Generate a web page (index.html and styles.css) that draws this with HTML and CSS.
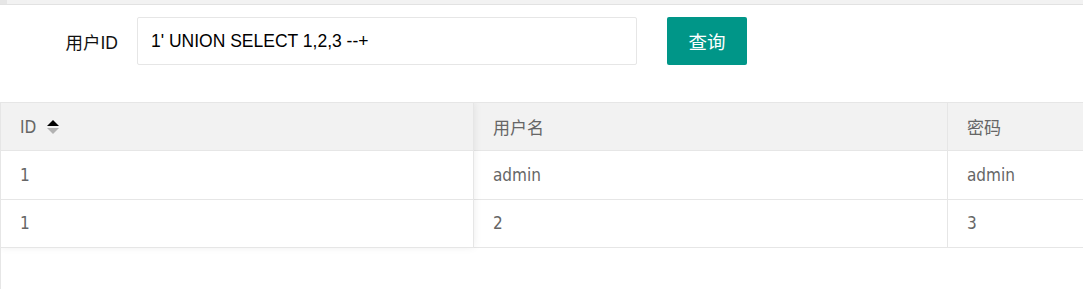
FILE: index.html
```html
<!DOCTYPE html>
<html lang="zh-CN">
<head>
    <meta charset="UTF-8">
    <title>用户查询</title>
    <link rel="stylesheet" href="styles.css">
</head>
<body>
    <div class="top-strip"><span class="top-strip-edge"></span></div>

    <form class="search-form" onsubmit="return false">
        <label class="form-label" for="userId">用户ID</label>
        <input type="text" id="userId" class="form-input" value="1' UNION SELECT 1,2,3 --+">
        <button class="btn" type="submit">查询</button>
    </form>

    <div class="table-view">
        <div class="table-box">
            <!-- fixed left column -->
            <div class="fixed-col">
                <div class="cell head">
                    <span>ID</span>
                    <span class="sort">
                        <i class="sort-up"></i>
                        <i class="sort-down"></i>
                    </span>
                </div>
                <div class="cell">1</div>
                <div class="cell">1</div>
            </div>

            <div class="main-cols">
                <div class="col">
                    <div class="cell head">用户名</div>
                    <div class="cell">admin</div>
                    <div class="cell">2</div>
                </div>
                <div class="col">
                    <div class="cell head">密码</div>
                    <div class="cell">admin</div>
                    <div class="cell">3</div>
                </div>
            </div>
        </div>
    </div>
</body>
</html>
```

FILE: styles.css
```css
body {
    margin: 0;
    background-color: #fff;
    font-family: "DejaVu Sans Condensed", Roboto, "Noto Sans CJK SC", sans-serif;
    overflow: hidden;
}

.top-strip {
    height: 4px;
    background-color: #f2f2f2;
    border-bottom: 1px solid #e2e2e2;
    display: flex;
}

.top-strip-edge {
    width: 7px;
    background-color: #e6e6e6;
}

.search-form {
    display: flex;
    align-items: center;
    margin: 12px 0 37px;
}

.form-label {
    width: 137px;
    box-sizing: border-box;
    padding-right: 19px;
    text-align: right;
    font-size: 17.5px;
    color: #111;
    font-family: "Liberation Sans", "Noto Sans CJK SC", sans-serif;
}

.form-input {
    width: 500px;
    height: 48px;
    box-sizing: border-box;
    border: 1px solid #e6e6e6;
    border-radius: 2px;
    padding: 0 13px;
    font-family: "Liberation Sans", "Noto Sans CJK SC", sans-serif;
    font-size: 17.5px;
    color: #000;
    outline: none;
}

.btn {
    margin-left: 30px;
    width: 80px;
    height: 48px;
    border: none;
    border-radius: 2px;
    background-color: #009688;
    color: #fff;
    font-family: "Noto Sans CJK SC", sans-serif;
    font-size: 18.5px;
    cursor: pointer;
}

.table-view {
    border-top: 1px solid #e6e6e6;
    border-left: 1px solid #e6e6e6;
    height: 200px;
    overflow: hidden;
}

.table-box {
    display: flex;
    align-items: flex-start;
}

.fixed-col {
    width: 472px;
    flex: none;
    position: relative;
    z-index: 1;
    background-color: #fff;
    border-right: 1px solid #e6e6e6;
    box-shadow: 0 -1px 8px rgba(0, 0, 0, 0.08);
}

.main-cols {
    display: flex;
    flex: none;
}

.col {
    width: 473px;
    border-right: 1px solid #e6e6e6;
}

.cell {
    height: 48.5px;
    box-sizing: border-box;
    border-bottom: 1px solid #e6e6e6;
    padding: 0 19px;
    display: flex;
    align-items: center;
    font-size: 17px;
    color: #666;
    white-space: nowrap;
}

.cell.head {
    height: 48px;
    background-color: #f2f2f2;
}

.sort {
    display: flex;
    flex-direction: column;
    gap: 2px;
    margin-left: 11px;
}

.sort i {
    display: block;
    width: 0;
    height: 0;
    border-left: 6px solid transparent;
    border-right: 6px solid transparent;
}

.sort-up {
    border-bottom: 6px solid #000;
}

.sort-down {
    border-top: 6px solid #b2b2b2;
}
```
